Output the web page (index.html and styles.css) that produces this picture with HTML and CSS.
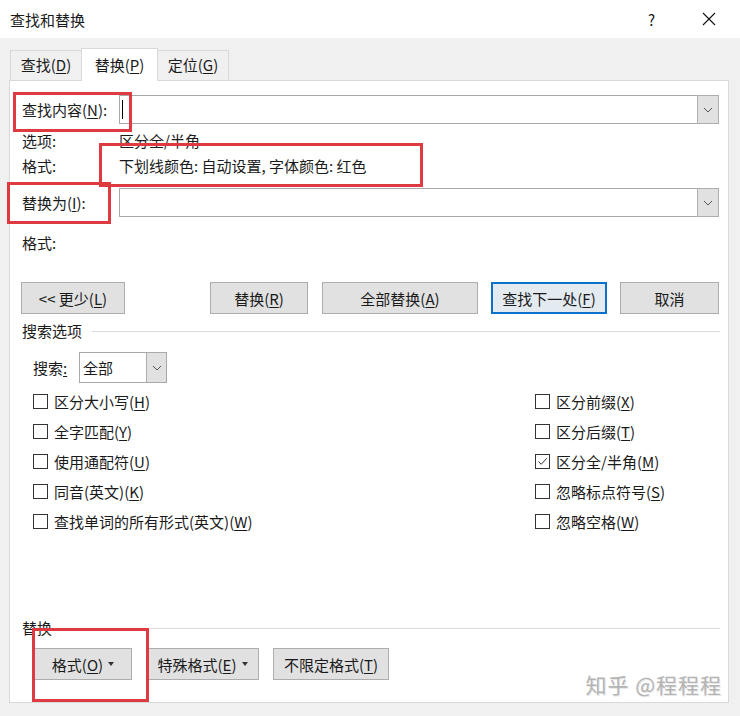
FILE: index.html
```html
<!DOCTYPE html>
<html lang="zh-CN">
<head>
<meta charset="utf-8">
<title>查找和替换</title>
<link rel="stylesheet" href="styles.css">
</head>
<body>
<div class="titlebar">
  <span class="title">查找和替换</span>
  <span class="help">?</span>
  <svg class="close" width="14" height="14" viewBox="0 0 14 14"><path d="M1 1L13 13M13 1L1 13" stroke="#111" stroke-width="1.1" fill="none"/></svg>
</div>
<div class="tabs">
  <div class="tab">查找(<u>D</u>)</div>
  <div class="tab active">替换(<u>P</u>)</div>
  <div class="tab">定位(<u>G</u>)</div>
</div>
<div class="panel">
  <div class="row find">
    <span class="label">查找内容(<u>N</u>):</span>
    <div class="combo"><div class="input"><span class="caret"></span></div><div class="drop"><svg width="10" height="6" viewBox="0 0 10 6"><path d="M1 1L5 5L9 1" stroke="#555" fill="none"/></svg></div></div>
  </div>
  <div class="info first"><span class="label">选项:</span><span>区分全/半角</span></div>
  <div class="info"><span class="label">格式:</span><span>下划线颜色: 自动设置, 字体颜色: 红色</span></div>
  <div class="row replace">
    <span class="label">替换为(<u>I</u>):</span>
    <div class="combo"><div class="input"></div><div class="drop"><svg width="10" height="6" viewBox="0 0 10 6"><path d="M1 1L5 5L9 1" stroke="#555" fill="none"/></svg></div></div>
  </div>
  <div class="info fmt2"><span class="label">格式:</span></div>
  <div class="btnrow">
    <button class="btn b-less">&lt;&lt; 更少(<u>L</u>)</button>
    <button class="btn b-rep">替换(<u>R</u>)</button>
    <button class="btn b-all">全部替换(<u>A</u>)</button>
    <button class="btn b-next">查找下一处(<u>F</u>)</button>
    <button class="btn b-cancel">取消</button>
  </div>
  <div class="section s-search"><span>搜索选项</span><span class="line"></span></div>
  <div class="searchrow">
    <span class="slabel">搜索<u>:</u></span>
    <div class="select"><span class="sval">全部</span><div class="sdrop"><svg width="10" height="6" viewBox="0 0 10 6"><path d="M1 1L5 5L9 1" stroke="#555" fill="none"/></svg></div></div>
  </div>
  <div class="checks">
    <div class="col">
      <div class="chk"><span class="box"></span>区分大小写(<u>H</u>)</div>
      <div class="chk"><span class="box"></span>全字匹配(<u>Y</u>)</div>
      <div class="chk"><span class="box"></span>使用通配符(<u>U</u>)</div>
      <div class="chk"><span class="box"></span>同音(英文)(<u>K</u>)</div>
      <div class="chk"><span class="box"></span>查找单词的所有形式(英文)(<u>W</u>)</div>
    </div>
    <div class="col">
      <div class="chk"><span class="box"></span>区分前缀(<u>X</u>)</div>
      <div class="chk"><span class="box"></span>区分后缀(<u>T</u>)</div>
      <div class="chk"><span class="box"><svg width="13" height="13" viewBox="0 0 13 13"><path d="M2.5 6.5L5.2 9.3L10.8 3.3" stroke="#333" stroke-width="1" fill="none"/></svg></span>区分全/半角(<u>M</u>)</div>
      <div class="chk"><span class="box"></span>忽略标点符号(<u>S</u>)</div>
      <div class="chk"><span class="box"></span>忽略空格(<u>W</u>)</div>
    </div>
  </div>
  <div class="section s-replace"><span>替换</span><span class="line"></span></div>
  <div class="btnrow2">
    <button class="btn b-fmt">格式(<u>O</u>) <span class="tri"></span></button>
    <button class="btn b-special">特殊格式(<u>E</u>) <span class="tri"></span></button>
    <button class="btn b-nofmt">不限定格式(<u>T</u>)</button>
  </div>
  <div class="watermark">知乎 @程程程</div>
  <div class="mark m1"></div>
  <div class="mark m2"></div>
  <div class="mark m3"></div>
  <div class="mark m4"></div>
</div>
</body>
</html>
```
FILE: styles.css
```css
* { box-sizing: border-box; }
body {
  margin: 0;
  width: 740px;
  height: 716px;
  overflow: hidden;
  background: #f0f0f0;
  font-family: "Noto Sans CJK SC", "Microsoft YaHei", sans-serif;
  font-size: 15px;
  color: #1a1a1a;
}
u { text-decoration: underline; text-underline-offset: 2px; }

.titlebar {
  height: 38px;
  background: #fff;
  display: flex;
  align-items: center;
  padding-left: 10px;
}
.title { flex: 1; font-size: 15px; }
.help { font-size: 15px; margin-right: 47px; }
.close { margin-right: 24px; }

.tabs {
  margin-top: 10px;
  padding-left: 10px;
  height: 32px;
  display: flex;
  align-items: flex-end;
}
.tab {
  width: 72px;
  height: 30px;
  line-height: 28px;
  text-align: center;
  border: 1px solid #d9d9d9;
  border-bottom: none;
  background: #f0f0f0;
}
.tab + .tab { margin-left: -1px; }
.tab.active {
  width: 77px;
  height: 33px;
  line-height: 32px;
  background: #fff;
  position: relative;
  z-index: 1;
  margin-bottom: -1px;
}

.panel {
  margin-left: 9px;
  width: 720px;
  height: 623px;
  background: #fff;
  border: 1px solid #d9d9d9;
  position: relative;
}

.row { display: flex; align-items: center; padding-left: 12px; }
.row.find { margin-top: 14px; }
.row.replace { margin-top: 10px; }
.label { width: 97px; flex: none; }
.combo {
  width: 600px;
  height: 29px;
  border: 1px solid #a9a9a9;
  display: flex;
  background: #fff;
}
.input { flex: 1; display: flex; align-items: center; padding-left: 2px; }
.caret { width: 1px; height: 19px; background: #000; }
.drop {
  width: 22px;
  margin: -1px -1px -1px 0;
  border: 1px solid #adadad;
  background: #e1e1e1;
  display: flex;
  align-items: center;
  justify-content: center;
}

.info { display: flex; height: 25px; line-height: 25px; padding-left: 12px; }
.info.first { margin-top: 4px; }
.info.fmt2 { margin-top: 13px; }

.btn {
  font-family: inherit;
  font-size: 15px;
  color: #1a1a1a;
  height: 32px;
  background: #e1e1e1;
  border: 1px solid #adadad;
  padding: 0;
  display: inline-flex;
  align-items: center;
  justify-content: center;
}
.btnrow { display: flex; margin-top: 27px; padding-left: 11px; }
.b-less { width: 104px; }
.b-rep { width: 98px; margin-left: 85px; }
.b-all { width: 156px; margin-left: 14px; }
.b-next { width: 116px; margin-left: 13px; border: 2px solid #0a72c9; background: #e3ebf1; }
.b-cancel { width: 99px; margin-left: 13px; }

.section {
  display: flex;
  align-items: center;
  height: 20px;
  line-height: 20px;
  padding-left: 12px;
  padding-right: 8px;
}
.section .line { flex: 1; height: 1px; background: #dcdcdc; margin-left: 10px; }
.s-search { margin-top: 7px; }
.s-replace { margin-top: 82px; }

.searchrow { display: flex; align-items: center; margin-top: 11px; padding-left: 23px; height: 31px; }
.slabel { width: 46px; }
.select {
  width: 88px;
  height: 31px;
  border: 1px solid #a9a9a9;
  display: flex;
}
.sval { flex: 1; padding-left: 3px; line-height: 29px; }
.sdrop {
  width: 20px;
  border-left: 1px solid #adadad;
  background: #e1e1e1;
  display: flex;
  align-items: center;
  justify-content: center;
}

.checks { display: grid; grid-template-columns: 502px auto; margin-top: 3px; padding-left: 23px; }
.chk { display: flex; align-items: center; height: 30px; }
.box {
  width: 15px;
  height: 15px;
  border: 1px solid #333;
  margin-right: 6px;
  display: flex;
  align-items: center;
  justify-content: center;
  flex: none;
}

.btnrow2 { display: flex; margin-top: 10px; padding-left: 24px; }
.b-fmt { width: 98px; }
.b-special { width: 113px; margin-left: 14px; }
.b-nofmt { width: 116px; margin-left: 14px; }
.tri {
  display: inline-block;
  width: 0;
  height: 0;
  margin-left: 5px;
  border-left: 3.5px solid transparent;
  border-right: 3.5px solid transparent;
  border-top: 4px solid #333;
}

.watermark {
  position: absolute;
  right: 6px;
  bottom: 3px;
  font-size: 21px;
  color: #b4b4b4;
  letter-spacing: 1px;
  text-shadow: 1px 1px 0 #e8e8e8;
}

.mark { position: absolute; border: 3px solid #df3a40; }
.m1 { left: 3px; top: 11px; width: 119px; height: 40px; }
.m2 { left: 89px; top: 62px; width: 324px; height: 44px; }
.m3 { left: -3px; top: 101px; width: 104px; height: 42px; }
.m4 { left: 22px; top: 547px; width: 117px; height: 74px; }
```
